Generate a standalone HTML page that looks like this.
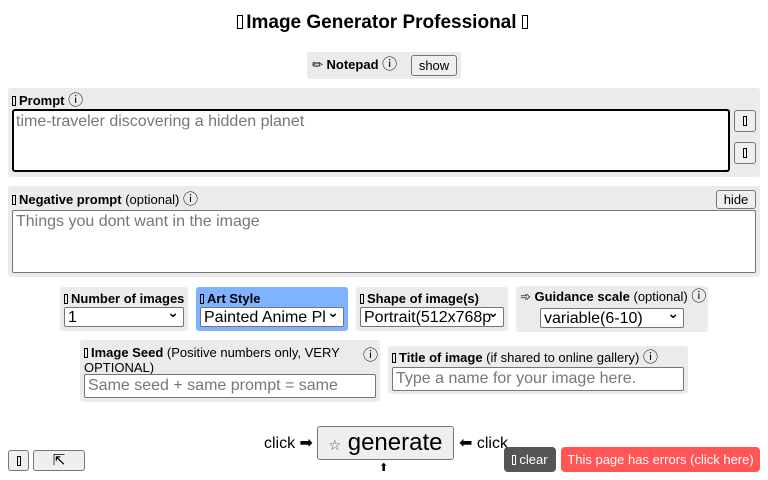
<!DOCTYPE html>
<html><head><meta charset="utf-8"><style>
*{box-sizing:border-box}
body{margin:0;width:768px;height:480px;position:relative;font-family:"Liberation Sans","DejaVu Sans",sans-serif;font-size:13px;color:#000;background:#fff;overflow:hidden}
.a{position:absolute}
.panel{position:absolute;background:#ebebeb;border-radius:3px}
.t{display:inline-block;width:4px;height:10px;border:1px solid #000;vertical-align:-1px;margin-right:3px}
.i{font-weight:normal;font-size:15px;line-height:13px}
.btn{position:absolute;background:#efefef;border:1px solid #767676;border-radius:3px;font-size:13px;text-align:center}
.sel{position:absolute;background:#fff;border:1px solid #767676;border-radius:2px;font-size:16px;padding-left:3px;line-height:19px;white-space:nowrap;overflow:hidden}
.sel:after{content:"⌄";position:absolute;right:4px;top:-5px;font-size:14px;font-weight:bold}
.inp{position:absolute;background:#fff;border:1px solid #767676;border-radius:2px;font-size:16px;color:#777;padding-left:3px;white-space:nowrap;overflow:hidden}
b{font-weight:bold}
</style></head><body>
<div class="a" style="left:0;width:768px;top:12px;text-align:center;font-size:19px;font-weight:bold"><span class="t" style="width:6px;height:14px"></span>Image Generator Professional <span class="t" style="width:6px;height:14px"></span></div>

<div class="panel" style="left:307px;top:52px;width:154px;height:27px"></div>
<div class="a" style="left:312px;top:57px;font-weight:bold">✏ Notepad <span class="i">ⓘ</span></div>
<div class="btn" style="left:411px;top:55px;width:46px;height:21px;line-height:19px">show</div>

<div class="panel" style="left:8px;top:88px;width:752px;height:89px"></div>
<div class="a" style="left:12px;top:93px;font-weight:bold"><span class="t"></span>Prompt <span class="i">ⓘ</span></div>
<div class="a" style="left:12px;top:109px;width:718px;height:63px;background:#fff;border:2px solid #000;border-radius:3px;font-size:16px;color:#777;padding:2px 2px">time-traveler discovering a hidden planet</div>
<div class="btn" style="left:734px;top:110px;width:22px;height:22px"><span class="t" style="margin:5px 0 0 0"></span></div>
<div class="btn" style="left:734px;top:142px;width:22px;height:22px"><span class="t" style="margin:5px 0 0 0"></span></div>

<div class="panel" style="left:8px;top:186px;width:752px;height:91px"></div>
<div class="a" style="left:12px;top:192px"><b><span class="t"></span>Negative prompt</b> (optional) <span class="i">ⓘ</span></div>
<div class="btn" style="left:716px;top:190px;width:40px;height:19px;line-height:17px">hide</div>
<div class="a" style="left:12px;top:210px;width:744px;height:63px;background:#fff;border:1px solid #767676;border-radius:2px;font-size:16px;color:#777;padding:2px 3px">Things you dont want in the image</div>

<div class="panel" style="left:60px;top:287px;width:128px;height:44px"></div>
<div class="a" style="left:64px;top:291px;font-weight:bold"><span class="t"></span>Number of images</div>
<div class="sel" style="left:64px;top:307px;width:120px;height:20px">1</div>

<div class="panel" style="left:196px;top:287px;width:152px;height:44px;background:#80b3ff"></div>
<div class="a" style="left:200px;top:291px;font-weight:bold"><span class="t"></span>Art Style</div>
<div class="sel" style="left:200px;top:307px;width:144px;height:20px;padding-right:16px">Painted Anime Pl</div>

<div class="panel" style="left:356px;top:287px;width:152px;height:44px"></div>
<div class="a" style="left:360px;top:291px;font-weight:bold"><span class="t"></span>Shape of image(s)</div>
<div class="sel" style="left:360px;top:307px;width:144px;height:20px;padding-right:16px">Portrait(512x768p</div>

<div class="panel" style="left:516px;top:286px;width:192px;height:46px"></div>
<div class="a" style="left:520px;top:289px"><b>➾ Guidance scale</b> (optional) <span class="i">ⓘ</span></div>
<div class="sel" style="left:540px;top:308px;width:144px;height:20px">variable(6-10)</div>

<div class="panel" style="left:80px;top:340px;width:300px;height:62px"></div>
<div class="a" style="left:84px;top:345px;width:270px;line-height:15px"><b><span class="t"></span>Image Seed</b> (Positive numbers only, VERY OPTIONAL)</div>
<div class="a" style="left:363px;top:348px"><span class="i">ⓘ</span></div>
<div class="inp" style="left:84px;top:374px;width:292px;height:24px;line-height:22px">Same seed + same prompt = same</div>

<div class="panel" style="left:388px;top:346px;width:300px;height:48px"></div>
<div class="a" style="left:392px;top:350px"><b><span class="t"></span>Title of image</b> (if shared to online gallery) <span class="i">ⓘ</span></div>
<div class="inp" style="left:392px;top:367px;width:292px;height:24px;line-height:22px">Type a name for your image here.</div>

<div class="a" style="left:264px;top:433px;font-size:16px">click ➡</div>
<div class="btn" style="left:317px;top:426px;width:137px;height:34px;font-size:24px;line-height:32px"><span style="font-size:14px;color:#555">☆</span> generate</div>
<div class="a" style="left:459px;top:433px;font-size:16px">⬅ click</div>
<div class="a" style="left:379px;top:461px;font-size:11px">⬆</div>

<div class="btn" style="left:8px;top:450px;width:21px;height:21px"><span class="t" style="margin:5px 0 0 0"></span></div>
<div class="btn" style="left:33px;top:450px;width:52px;height:21px;line-height:19px;font-size:15px">⇱</div>

<div class="a" style="left:504px;top:447px;width:52px;height:25px;background:#555;color:#fff;border-radius:4px;line-height:25px;text-align:center"><span class="t" style="border-color:#fff"></span>clear</div>
<div class="a" style="left:561px;top:447px;width:199px;height:25px;background:#f55;color:#fff;border-radius:4px;line-height:25px;text-align:center">This page has errors (click here)</div>
</body></html>
